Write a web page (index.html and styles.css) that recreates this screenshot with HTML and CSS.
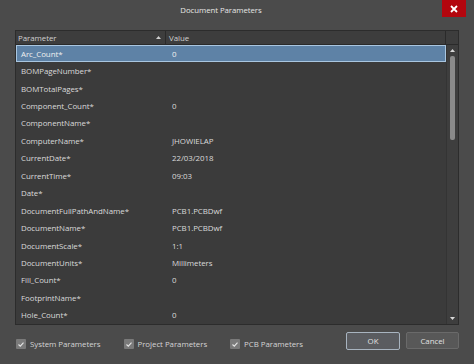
FILE: index.html
```html
<!DOCTYPE html>
<html>
<head>
<meta charset="utf-8">
<link rel="stylesheet" href="styles.css">
</head>
<body>
<div class="dialog">
  <div class="titlebar">
    <div class="title">Document Parameters</div>
    <div class="close"><svg width="8" height="8" viewBox="0 0 8 8"><path d="M1 1L7 7M7 1L1 7" stroke="#fff" stroke-width="1.8"/></svg></div>
  </div>
  <div class="grid">
    <div class="head">
      <div class="hcell hparam">Parameter<svg class="sort" width="5" height="3" viewBox="0 0 5 3"><path d="M0 3L2.5 0L5 3Z" fill="#cfcfcf"/></svg></div>
      <div class="hcell hvalue">Value</div>
      <div class="hcell hscroll"></div>
    </div>
    <div class="body">
      <div class="rows">
        <div class="row sel"><span class="p">Arc_Count*</span><span class="v">0</span></div>
        <div class="row"><span class="p">BOMPageNumber*</span><span class="v"></span></div>
        <div class="row"><span class="p">BOMTotalPages*</span><span class="v"></span></div>
        <div class="row"><span class="p">Component_Count*</span><span class="v">0</span></div>
        <div class="row"><span class="p">ComponentName*</span><span class="v"></span></div>
        <div class="row"><span class="p">ComputerName*</span><span class="v">JHOWIELAP</span></div>
        <div class="row"><span class="p">CurrentDate*</span><span class="v">22/03/2018</span></div>
        <div class="row"><span class="p">CurrentTime*</span><span class="v">09:03</span></div>
        <div class="row"><span class="p">Date*</span><span class="v"></span></div>
        <div class="row"><span class="p">DocumentFullPathAndName*</span><span class="v">PCB1.PCBDwf</span></div>
        <div class="row"><span class="p">DocumentName*</span><span class="v">PCB1.PCBDwf</span></div>
        <div class="row"><span class="p">DocumentScale*</span><span class="v">1:1</span></div>
        <div class="row"><span class="p">DocumentUnits*</span><span class="v">Millimeters</span></div>
        <div class="row"><span class="p">Fill_Count*</span><span class="v">0</span></div>
        <div class="row"><span class="p">FootprintName*</span><span class="v"></span></div>
        <div class="row"><span class="p">Hole_Count*</span><span class="v">0</span></div>
      </div>
      <div class="scrollbar">
        <svg class="arrow" width="5" height="3" viewBox="0 0 5 3"><path d="M0 3L2.5 0L5 3Z" fill="#d8d8d8"/></svg>
        <div class="track"><div class="thumb"></div></div>
        <svg class="arrow" width="5" height="3" viewBox="0 0 5 3"><path d="M0 0L2.5 3L5 0Z" fill="#d8d8d8"/></svg>
      </div>
    </div>
  </div>
  <div class="footer">
    <div class="checks">
      <label class="check"><span class="box"><svg width="6" height="5" viewBox="0 0 6 5"><path d="M0.5 2.5L2.3 4.2L5.5 0.6" stroke="#e6e6e6" stroke-width="1.1" fill="none"/></svg></span>System Parameters</label>
      <label class="check"><span class="box"><svg width="6" height="5" viewBox="0 0 6 5"><path d="M0.5 2.5L2.3 4.2L5.5 0.6" stroke="#e6e6e6" stroke-width="1.1" fill="none"/></svg></span>Project Parameters</label>
      <label class="check"><span class="box"><svg width="6" height="5" viewBox="0 0 6 5"><path d="M0.5 2.5L2.3 4.2L5.5 0.6" stroke="#e6e6e6" stroke-width="1.1" fill="none"/></svg></span>PCB Parameters</label>
    </div>
    <div class="buttons">
      <div class="btn ok">OK</div>
      <div class="btn">Cancel</div>
    </div>
  </div>
</div>
</body>
</html>
```
FILE: styles.css
```css
html, body {
  margin: 0;
  padding: 0;
  background: #4b4b4b;
}
.dialog {
  width: 474px;
  height: 364px;
  display: flex;
  flex-direction: column;
  font-family: "Open Sans", "Noto Sans", sans-serif;
  font-size: 7.9px;
  letter-spacing: -0.05px;
  color: #dadada;
  background: #4b4b4b;
}
.titlebar {
  height: 30px;
  display: flex;
  align-items: flex-start;
}
.title {
  flex: 1;
  text-align: center;
  line-height: 21px;
  font-size: 7.8px;
  color: #e6e6e6;
}
.close {
  width: 24px;
  height: 17px;
  margin-right: 8px;
  background: #b3060e;
  display: flex;
  align-items: center;
  justify-content: center;
}
.grid {
  margin: 0 15px;
  height: 295px;
  border: 1px solid #2c2c2c;
  box-sizing: border-box;
  background: #3b3b3b;
  display: flex;
  flex-direction: column;
}
.head {
  height: 15px;
  display: flex;
  background: #3d3d3d;
  border-bottom: 1px solid #2a2a2a;
}
.hcell {
  display: flex;
  align-items: center;
  color: #d0d0d0;
  box-sizing: border-box;
}
.hparam {
  width: 150px;
  padding-left: 2px;
  border-right: 1px solid #2a2a2a;
}
.sort {
  margin-left: auto;
  margin-right: 4px;
}
.hvalue {
  flex: 1;
  padding-left: 3px;
  border-right: 1px solid #2a2a2a;
}
.hscroll {
  width: 12px;
}
.body {
  flex: 1;
  display: flex;
}
.rows {
  flex: 1;
  display: flex;
  flex-direction: column;
}
.row {
  height: 17.45px;
  display: flex;
  align-items: center;
  box-sizing: border-box;
}
.row.sel {
  background: #5e82a6;
  border: 1px solid #a9c6e0;
  color: #f0f0f0;
}
.p {
  width: 151px;
  padding-left: 5px;
  box-sizing: border-box;
}
.row.sel .p {
  padding-left: 4px;
  width: 150px;
}
.v {
  flex: 1;
  padding-left: 5px;
}
.scrollbar {
  width: 12px;
  border-left: 1px solid #343434;
  background: #3e3e3e;
  display: flex;
  flex-direction: column;
  align-items: center;
  padding: 4px 0 4px;
  box-sizing: border-box;
}
.arrow {
  flex: none;
}
.track {
  flex: 1;
  width: 100%;
  display: flex;
  justify-content: center;
  padding-top: 4px;
}
.thumb {
  width: 5px;
  height: 84px;
  border-radius: 2px;
  background: #8a8a8a;
}
.footer {
  flex: 1;
  display: flex;
  align-items: flex-start;
  padding: 7px 15px 0 16px;
}
.checks {
  flex: 1;
  display: flex;
  gap: 23px;
  padding-top: 7px;
}
.check {
  display: flex;
  align-items: center;
  gap: 4px;
  color: #d4d4d4;
}
.box {
  width: 10px;
  height: 10px;
  background: #7a7a7a;
  border-radius: 1px;
  display: flex;
  align-items: center;
  justify-content: center;
}
.buttons {
  display: flex;
  gap: 6px;
}
.btn {
  width: 53px;
  height: 17px;
  box-sizing: border-box;
  border: 1px solid #6a6a6a;
  border-radius: 2px;
  background: #585858;
  display: flex;
  align-items: center;
  justify-content: center;
  color: #e0e0e0;
}
.btn.ok {
  width: 54px;
  height: 18px;
  border: 1px solid #a8b4c0;
  background: #5a5c60;
}
```
